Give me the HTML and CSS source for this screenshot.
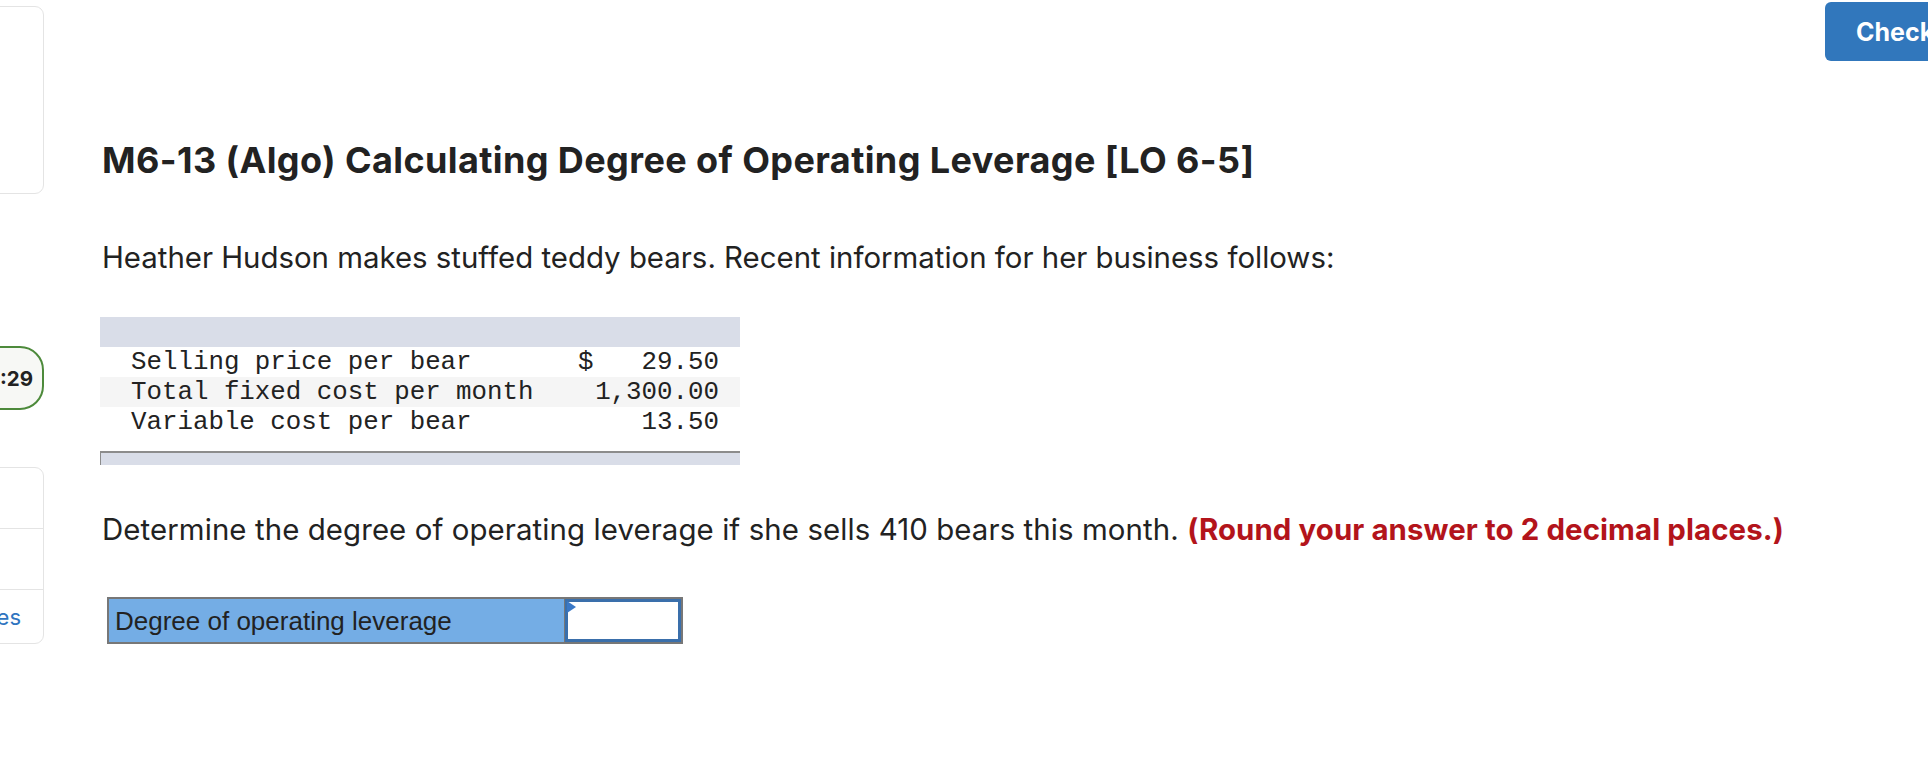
FILE: index.html
```html
<!DOCTYPE html>
<html lang="en">
<head>
<meta charset="utf-8">
<title>M6-13 (Algo) Calculating Degree of Operating Leverage</title>
<link rel="stylesheet" href="styles.css">
</head>
<body>
<div class="page">
  <aside class="sidebar">
    <div class="card card-top"></div>
    <div class="timer"><span class="timer-text">0:29</span></div>
    <div class="card card-list">
      <div class="list-row"></div>
      <div class="list-row"></div>
      <div class="list-row list-last"><span class="ref-link">References</span></div>
    </div>
  </aside>

  <main class="main">
    <h1 class="title">M6-13 (Algo) Calculating Degree of Operating Leverage [LO 6-5]</h1>
    <p class="intro">Heather Hudson makes stuffed teddy bears. Recent information for her business follows:</p>

    <div class="data-table">
      <div class="dt-head"></div>
      <div class="dt-row">
        <span class="dt-label">Selling price per bear</span>
        <span class="dt-cur">$</span>
        <span class="dt-amt">29.50</span>
      </div>
      <div class="dt-row dt-alt">
        <span class="dt-label">Total fixed cost per month</span>
        <span class="dt-cur"></span>
        <span class="dt-amt">1,300.00</span>
      </div>
      <div class="dt-row">
        <span class="dt-label">Variable cost per bear</span>
        <span class="dt-cur"></span>
        <span class="dt-amt">13.50</span>
      </div>
      <div class="dt-foot"></div>
    </div>

    <p class="question">Determine the degree of operating leverage if she sells 410 bears this month. <strong class="hint">(Round your answer to 2 decimal places.)</strong></p>

    <div class="answer">
      <div class="answer-label">Degree of operating leverage</div>
      <div class="answer-input"><span class="flag"></span></div>
    </div>
  </main>

  <div class="toolbar">
    <button class="check-btn">Check my work</button>
  </div>
</div>
</body>
</html>
```

FILE: styles.css
```css
html, body {
  margin: 0;
  padding: 0;
  background: #ffffff;
}

body {
  font-family: Inter, Lato, "Noto Sans", "Liberation Sans", sans-serif;
  color: #222222;
}

.page {
  display: flex;
  width: 1928px;
  height: 768px;
  overflow: hidden;
}

/* ---------- left sidebar ---------- */
.sidebar {
  flex: none;
  width: 44px;
  overflow: hidden;
  display: flex;
  flex-direction: column;
  padding-top: 6px;
}

.card {
  box-sizing: border-box;
  width: 144px;
  margin-left: -100px;
  border: 1px solid #e4e4e4;
  border-radius: 9px;
  background: #ffffff;
}

.card-top {
  height: 188px;
}

.timer {
  box-sizing: border-box;
  width: 144px;
  margin-left: -100px;
  margin-top: 152px;
  height: 64px;
  border: 2px solid #4d8a3b;
  border-radius: 24px;
  background: #f7f8f5;
  display: flex;
  align-items: center;
  justify-content: flex-end;
  padding-right: 9px;
}

.timer-text {
  font-weight: 700;
  font-size: 20.5px;
  color: #222222;
}

.card-list {
  margin-top: 57px;
  height: 177px;
  display: flex;
  flex-direction: column;
}

.list-row {
  flex: none;
  height: 60px;
  border-bottom: 1px solid #e4e4e4;
  display: flex;
  align-items: center;
  justify-content: flex-end;
  padding-right: 22px;
}

.list-last {
  border-bottom: none;
  flex: 1;
}

.ref-link {
  font-size: 22px;
  color: #2f75c0;
}

/* ---------- main ---------- */
.main {
  flex: 1;
  padding-left: 58px;
  padding-top: 138px;
}

.title {
  margin: 0;
  font-weight: 700;
  font-size: 36px;
  line-height: 44px;
  color: #222222;
  letter-spacing: 0.4px;
}

.intro {
  margin: 58px 0 0 0;
  font-size: 29.4px;
  line-height: 36px;
  color: #222222;
}

.data-table {
  margin: 41px 0 0 -2px;
  width: 640px;
  font-family: "Liberation Mono", "DejaVu Sans Mono", monospace;
  font-size: 25.8px;
  color: #222222;
}

.dt-head {
  height: 30px;
  background: #d9dde8;
}

.dt-row {
  display: flex;
  align-items: center;
  height: 30px;
  padding-left: 31px;
  padding-right: 21px;
  white-space: pre;
}

.dt-alt {
  background: #f5f5f5;
}

.dt-label {
  flex: 1;
}

.dt-cur {
  width: 17px;
}

.dt-amt {
  width: 124px;
  text-align: right;
}

.dt-foot {
  box-sizing: border-box;
  margin-top: 14px;
  height: 14px;
  background: #d9dde8;
  border-top: 2px solid #8c8c8c;
  border-left: 1px solid #8c8c8c;
}

.question {
  margin: 47px 0 0 0;
  font-size: 29.4px;
  line-height: 36px;
  color: #222222;
  letter-spacing: 0.1px;
}

.hint {
  color: #b3141b;
  font-weight: 700;
}

.answer {
  margin: 49px 0 0 5px;
  display: flex;
  width: 576px;
  height: 47px;
  box-sizing: border-box;
  border: 2px solid #777777;
}

.answer-label {
  width: 456px;
  box-sizing: border-box;
  background: #74ade5;
  border-right: 1px solid #777777;
  font-family: "Liberation Sans", Arial, sans-serif;
  font-size: 26px;
  color: #222222;
  display: flex;
  align-items: center;
  padding-left: 6px;
  padding-top: 2px;
}

.answer-input {
  flex: 1;
  position: relative;
  background: #ffffff;
  border: 3px solid #3a6fab;
}

.flag {
  position: absolute;
  left: -1px;
  top: -1px;
  width: 0;
  height: 0;
  border-top: 6px solid transparent;
  border-bottom: 6px solid transparent;
  border-left: 9px solid #3a78c6;
}

/* ---------- right toolbar ---------- */
.toolbar {
  flex: none;
  width: 103px;
  overflow: hidden;
  padding-top: 2px;
}

.check-btn {
  display: block;
  width: 200px;
  height: 59px;
  border: none;
  border-radius: 6px;
  background: #3177bc;
  color: #ffffff;
  font-family: Inter, Lato, "Liberation Sans", sans-serif;
  font-weight: 700;
  font-size: 25px;
  text-align: left;
  padding: 0 0 0 31px;
  white-space: nowrap;
  cursor: pointer;
}
```
